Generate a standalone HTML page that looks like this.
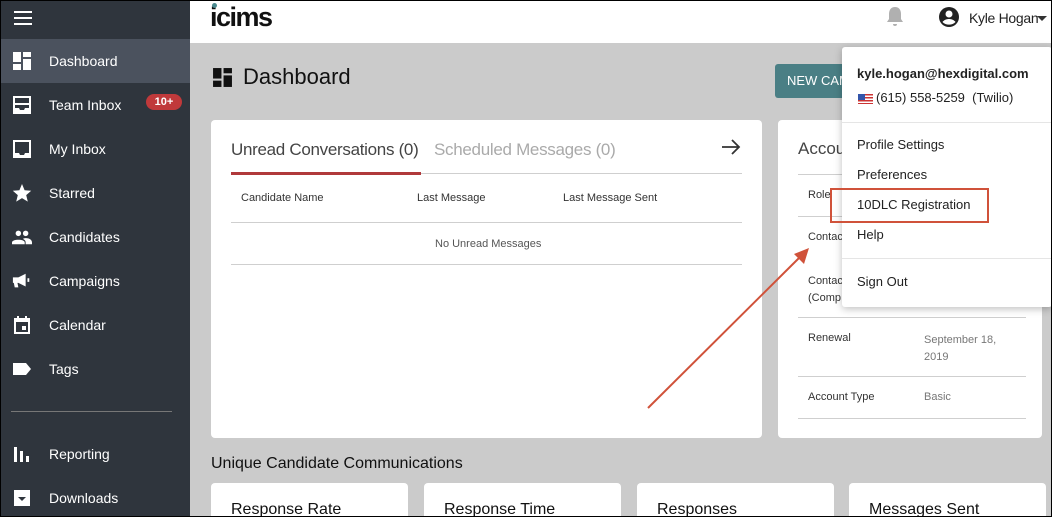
<!DOCTYPE html>
<html><head><meta charset="utf-8"><style>
*{box-sizing:border-box;margin:0;padding:0}
html{width:1052px;height:517px;overflow:hidden}
body{width:1052px;height:517px;overflow:hidden;font-family:"Liberation Sans",sans-serif;background:#cbcbcb;position:relative}
.sb{position:absolute;left:0;top:0;width:190px;height:517px;background:#2f353d;color:#fff}
.it{position:absolute;left:0;width:190px;height:44px;font-size:14px;line-height:44px;padding-left:49px}
.ic{position:absolute;left:12px;top:12px;width:20px;height:20px}
.hdr{position:absolute;left:190px;top:0;right:0;height:43px;background:#fff}
.card{position:absolute;background:#fff;border-radius:4px}
.t{position:absolute;white-space:nowrap}
.ln{position:absolute;height:1px;background:#cfcfcf}
</style></head><body>
<div class="sb">
 <div style="position:absolute;left:14px;top:11px;width:18px;height:2px;background:#fff;box-shadow:0 6px 0 #fff,0 12px 0 #fff"></div>
 <div class="it" style="top:39px;background:#4b525e">Dashboard<svg class="ic" viewBox="0 0 20 20"><rect x="1" y="1" width="8" height="10" fill="#fff"/><rect x="11" y="1" width="8" height="5" fill="#fff"/><rect x="1" y="13" width="8" height="6" fill="#fff"/><rect x="11" y="8" width="8" height="11" fill="#fff"/></svg></div>
 <div class="it" style="top:83px">Team Inbox<svg class="ic" viewBox="0 0 20 20"><path d="M1 1h18v18H1z M3 3v5h14V3z M3 10v3h4l1 2h4l1-2h4v-3z" fill="#fff" fill-rule="evenodd"/></svg><span style="position:absolute;left:146px;top:11px;width:36px;height:16px;background:#c0393b;border-radius:8px;font-size:11px;line-height:16px;text-align:center;font-weight:bold">10+</span></div>
 <div class="it" style="top:127px">My Inbox<svg class="ic" viewBox="0 0 20 20"><path d="M1 1h18v18H1z M3 3v11h4l1 2h4l1-2h4V3z" fill="#fff" fill-rule="evenodd"/></svg></div>
 <div class="it" style="top:171px">Starred<svg class="ic" viewBox="0 0 20 20"><path d="M10 1l2.6 6.2 6.6.5-5 4.4 1.6 6.5L10 15.1l-5.8 3.5 1.6-6.5-5-4.4 6.6-.5z" fill="#fff"/></svg></div>
 <div class="it" style="top:215px">Candidates<svg class="ic" viewBox="0 0 22 20"><circle cx="7" cy="6" r="3" fill="#fff"/><circle cx="15" cy="6" r="3" fill="#fff"/><path d="M0 16c0-4 14-4 14 0v2H0zM12 12c4-2 10 0 10 4v2h-7v-2c0-2-1-3-3-4z" fill="#fff"/></svg></div>
 <div class="it" style="top:259px">Campaigns<svg class="ic" viewBox="0 0 22 20"><path d="M1 6h6l8-4v14l-8-4H6l1 5H3l-1-5H1z M17 7h2v4h-2z" fill="#fff"/></svg></div>
 <div class="it" style="top:303px">Calendar<svg class="ic" viewBox="0 0 20 20"><path d="M2 3h16v16H2z M4 7v10h12V7z" fill="#fff" fill-rule="evenodd"/><rect x="5" y="1" width="2" height="4" fill="#fff"/><rect x="13" y="1" width="2" height="4" fill="#fff"/><rect x="10" y="11" width="4" height="4" fill="#fff"/></svg></div>
 <div class="it" style="top:347px">Tags<svg class="ic" viewBox="0 0 20 20"><path d="M1 4h13l5 6-5 6H1z" fill="#fff"/></svg></div>
 <div style="position:absolute;left:11px;top:411px;width:161px;height:1px;background:#777"></div>
 <div class="it" style="top:432px">Reporting<svg class="ic" viewBox="0 0 20 20"><rect x="2" y="3" width="3" height="15" fill="#fff"/><rect x="8" y="7" width="3" height="11" fill="#fff"/><rect x="14" y="12" width="3" height="6" fill="#fff"/></svg></div>
 <div class="it" style="top:476px">Downloads<svg class="ic" viewBox="0 0 20 20"><path d="M2 2h16v16H2z M6 9l4 4 4-4z" fill="#fff" fill-rule="evenodd"/></svg></div>
</div>
<div class="hdr">
 <div class="t" style="left:20px;top:2px;font-size:27px;font-weight:bold;letter-spacing:-1.5px;color:#111;line-height:30px">icims</div>
 <div style="position:absolute;left:22px;top:3px;width:5px;height:5px;border-radius:50%;background:#4a8a8f"></div>
 <svg style="position:absolute;left:695px;top:6px" width="20" height="22" viewBox="0 0 20 22"><path d="M10 1c-4 0-6 3-6 7v5l-2 3h16l-2-3V8c0-4-2-7-6-7zM8 18a2 2 0 004 0z" fill="#b0b0b0"/></svg>
 <svg style="position:absolute;left:748px;top:6px" width="22" height="22" viewBox="0 0 22 22"><circle cx="11" cy="11" r="10" fill="#222"/><circle cx="11" cy="8" r="3.5" fill="#fff"/><path d="M4.5 16c3-4 10-4 13 0-3 3.5-10 3.5-13 0z" fill="#fff"/></svg>
 <div class="t" style="left:779px;top:10px;font-size:14px;color:#222;letter-spacing:-0.3px">Kyle Hogan</div>
 <div style="position:absolute;left:847px;top:16px;border:5px solid transparent;border-top-color:#333"></div>
</div>
<svg style="position:absolute;left:212px;top:67px" width="21" height="21" viewBox="0 0 20 20"><rect x="1" y="1" width="8" height="10" fill="#111"/><rect x="11" y="1" width="8" height="5" fill="#111"/><rect x="1" y="13" width="8" height="6" fill="#111"/><rect x="11" y="8" width="8" height="11" fill="#111"/></svg>
<div class="t" style="left:243px;top:64px;font-size:22px;color:#111">Dashboard</div>
<div style="position:absolute;left:775px;top:64px;width:80px;height:34px;background:#4a7f85;border-radius:3px;color:#fff;font-size:13px;line-height:34px;padding-left:12px">NEW CAM</div>
<div class="card" style="left:211px;top:120px;width:551px;height:318px">
 <div class="t" style="left:20px;top:20px;font-size:17px;color:#444;letter-spacing:-0.3px">Unread Conversations (0)</div>
 <div class="t" style="left:223px;top:20px;font-size:17px;color:#aaa;letter-spacing:-0.3px">Scheduled Messages (0)</div>
 <svg style="position:absolute;left:510px;top:18px" width="20" height="18" viewBox="0 0 20 18"><path d="M1 9h17M11 2l7 7-7 7" stroke="#333" stroke-width="1.8" fill="none"/></svg>
 <div class="ln" style="left:20px;top:53px;width:511px"></div>
 <div style="position:absolute;left:20px;top:52px;width:190px;height:3px;background:#b0393b"></div>
 <div class="t" style="left:30px;top:72px;font-size:11px;color:#333">Candidate Name</div>
 <div class="t" style="left:206px;top:72px;font-size:11px;color:#333">Last Message</div>
 <div class="t" style="left:352px;top:72px;font-size:11px;color:#333">Last Message Sent</div>
 <div class="ln" style="left:20px;top:102px;width:511px"></div>
 <div class="t" style="left:224px;top:118px;font-size:11px;color:#555">No Unread Messages</div>
 <div class="ln" style="left:20px;top:144px;width:511px"></div>
</div>
<div class="card" style="left:778px;top:120px;width:264px;height:318px">
 <div class="t" style="left:20px;top:19px;font-size:17px;color:#444">Accou</div>
 <div class="ln" style="left:20px;top:54px;width:228px"></div>
 <div class="t" style="left:30px;top:69px;font-size:11px;color:#333">Role</div>
 <div class="ln" style="left:20px;top:96px;width:228px"></div>
 <div class="t" style="left:30px;top:111px;font-size:11px;color:#333">Contac</div>
 <div class="t" style="left:30px;top:153px;font-size:11px;color:#333;line-height:17px">Contac<br>(Comp</div>
 <div class="ln" style="left:20px;top:197px;width:228px"></div>
 <div class="t" style="left:30px;top:212px;font-size:11px;color:#333">Renewal</div>
 <div class="t" style="left:146px;top:212px;font-size:11px;color:#777;line-height:17px">September 18,<br>2019</div>
 <div class="ln" style="left:20px;top:256px;width:228px"></div>
 <div class="t" style="left:30px;top:271px;font-size:11px;color:#333">Account Type</div>
 <div class="t" style="left:146px;top:271px;font-size:11px;color:#777">Basic</div>
 <div class="ln" style="left:20px;top:298px;width:228px"></div>
</div>
<div class="t" style="left:211px;top:455px;font-size:16px;color:#111">Unique Candidate Communications</div>
<div class="card" style="left:211px;top:483px;width:197px;height:40px"><div class="t" style="left:20px;top:18px;font-size:16px;color:#111">Response Rate</div></div>
<div class="card" style="left:424px;top:483px;width:197px;height:40px"><div class="t" style="left:20px;top:18px;font-size:16px;color:#111">Response Time</div></div>
<div class="card" style="left:637px;top:483px;width:197px;height:40px"><div class="t" style="left:20px;top:18px;font-size:16px;color:#111">Responses</div></div>
<div class="card" style="left:849px;top:483px;width:197px;height:40px"><div class="t" style="left:20px;top:18px;font-size:16px;color:#111">Messages Sent</div></div>
<div style="position:absolute;left:842px;top:47px;width:210px;height:260px;background:#fff;box-shadow:0 2px 8px rgba(0,0,0,.25);border-radius:3px">
 <div class="t" style="left:15px;top:19px;font-size:13px;font-weight:bold;color:#222">kyle.hogan@hexdigital.com</div>
 <div style="position:absolute;left:16px;top:47px;width:15px;height:10px;background:repeating-linear-gradient(#c33 0 1.5px,#fff 1.5px 3px)"><div style="width:7px;height:6px;background:#35a"></div></div>
 <div class="t" style="left:34px;top:43px;font-size:13px;color:#222">(615) 558-5259 &nbsp;(Twilio)</div>
 <div class="ln" style="left:0;top:75px;width:210px;background:#e5e5e5"></div>
 <div class="t" style="left:15px;top:90px;font-size:13px;color:#222">Profile Settings</div>
 <div class="t" style="left:15px;top:120px;font-size:13px;color:#222">Preferences</div>
 <div class="t" style="left:15px;top:150px;font-size:13px;color:#222">10DLC Registration</div>
 <div class="t" style="left:15px;top:180px;font-size:13px;color:#222">Help</div>
 <div class="ln" style="left:0;top:211px;width:210px;background:#e5e5e5"></div>
 <div class="t" style="left:15px;top:227px;font-size:13px;color:#222">Sign Out</div>
</div>
<div style="position:absolute;left:830px;top:188px;width:159px;height:35px;border:2px solid #d0523a"></div>
<svg style="position:absolute;left:0;top:0" width="1052" height="517"><line x1="648" y1="408" x2="800" y2="257" stroke="#d0523a" stroke-width="2"/><path d="M809 248l-5 16-10-10z" fill="#d0523a"/></svg>
<div style="position:absolute;left:0;top:0;width:1052px;height:517px;border:1px solid #000;pointer-events:none"></div>
</body></html>
